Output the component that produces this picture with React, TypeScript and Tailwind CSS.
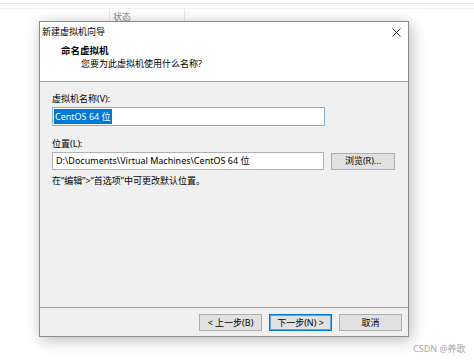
import React from 'react';

const font = "font-['Noto_Sans','Noto_Sans_CJK_SC',sans-serif]";

function CloseIcon() {
  return (
    <svg width="9" height="9" viewBox="0 0 9 9" className="block">
      <path d="M0.5 0.5 L8.5 8.5 M8.5 0.5 L0.5 8.5" stroke="#333" strokeWidth="1" fill="none" />
    </svg>
  );
}

function Btn({ children, primary }: { children: React.ReactNode; primary?: boolean }) {
  return (
    <div
      className={
        'w-[63px] h-[17px] flex items-center justify-center bg-[#e1e1e1] text-[9px] leading-[12px] text-black border ' +
        (primary ? 'border-[#0078d7] shadow-[inset_0_0_0_1px_#5fa3e0]' : 'border-[#adadad]')
      }
    >
      {children}
    </div>
  );
}

export default function App() {
  return (
    <div className={`relative w-[474px] h-[361px] bg-white overflow-hidden ${font}`}>
      {/* window behind the dialog */}
      <div className="flex flex-col">
        <div className="h-[3px]" />
        <div className="h-[1px] bg-[#e6e6e6]" />
        <div className="h-[4px]" />
        <div className="h-[1px] bg-[#f3f3f3]" />
        <div className="flex h-[14px]">
          <div className="w-[110px] border-r border-[#e8e8e8]" />
          <div className="w-[75px] border-r border-[#e8e8e8] pl-[3px] pt-[2px] text-[9px] leading-[12px] text-[#8a8a8a]">状态</div>
        </div>
      </div>

      {/* dialog */}
      <div className="absolute left-[39px] top-[21px] w-[370px] h-[316px] border border-[#8c8c8c] bg-white flex flex-col shadow-[2px_3px_14px_rgba(0,0,0,0.28)]">
        <div className="h-[20px] flex items-center justify-between pl-[2px] pr-[7px] bg-white">
          <span className="text-[9px] leading-[12px] text-black">新建虚拟机向导</span>
          <CloseIcon />
        </div>
        <div className="h-[40px] bg-white border-b border-[#a0a0a0] pt-[3px]">
          <div className="pl-[21px] text-[9.5px] leading-[12px] font-bold text-black">命名虚拟机</div>
          <div className="pl-[41px] mt-[1px] text-[9px] leading-[12px] text-black">您要为此虚拟机使用什么名称?</div>
        </div>
        <div className="flex-1 bg-[#f0f0f0] pl-[12px] pt-[11px] flex flex-col">
          <div className="text-[9px] leading-[12px] text-black">虚拟机名称(V):</div>
          <div className="mt-[2px] w-[273px] h-[19px] bg-white border border-[#7fb1e0] flex items-center pl-[1px]">
            <span className="bg-[#0078d7] text-white text-[9px] leading-[15px] px-[1px]">CentOS 64 位</span>
          </div>
          <div className="mt-[12px] text-[9px] leading-[12px] text-black">位置(L):</div>
          <div className="mt-[2px] flex items-center gap-[7px]">
            <div className="w-[272px] h-[18px] bg-white border border-[#b0b0b0] flex items-center pl-[3px] text-[9px] leading-[12px] text-black">
              D:\Documents\Virtual Machines\CentOS 64 位
            </div>
            <div className="w-[64px] h-[17px] bg-[#e1e1e1] border border-[#adadad] flex items-center justify-center text-[9px] leading-[12px] text-black">
              浏览(R)...
            </div>
          </div>
          <div className="mt-[5px] text-[9px] leading-[12px] text-black">在“编辑”&gt;“首选项”中可更改默认位置。</div>
        </div>
        <div className="h-[29px] bg-[#f0f0f0] border-t border-[#a0a0a0] flex justify-end items-start gap-[7px] pt-[6px] pr-[6px]">
          <Btn>&lt; 上一步(B)</Btn>
          <Btn primary>下一步(N) &gt;</Btn>
          <Btn>取消</Btn>
        </div>
      </div>

      <div className="absolute left-[413px] top-[343px] text-[9px] leading-[12px] text-[#a8a8a8]">CSDN @养歌</div>
    </div>
  );
}
